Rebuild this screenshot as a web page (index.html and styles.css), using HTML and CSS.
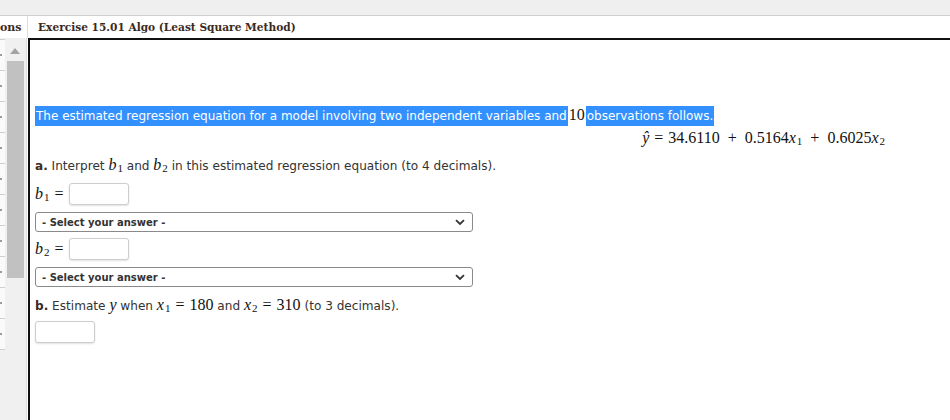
FILE: index.html
```html
<!DOCTYPE html>
<html>
<head>
<meta charset="utf-8">
<link rel="stylesheet" href="styles.css">
</head>
<body>
<div class="topbar"></div>
<div class="header">
  <div class="hside"><span>ons</span></div>
  <div class="htitle">Exercise 15.01 Algo (Least Square Method)</div>
</div>
<div class="main">
  <div class="side">
    <div class="list">
      <div class="li"></div><div class="li"></div><div class="li"></div><div class="li"></div>
      <div class="li"></div><div class="li"></div><div class="li"></div><div class="li"></div>
      <div class="li"></div><div class="li"></div>
    </div>
    <div class="scroll">
      <div class="arrow"></div>
      <div class="thumb"></div>
    </div>
  </div>
  <div class="gap"></div>
  <div class="content">
    <p class="intro"><span class="sel">The estimated regression equation for a model involving two independent variables and</span><span class="num">10</span><span class="sel">observations follows.</span></p>
    <p class="eq"><span class="mi">ŷ</span><span class="op">=</span>34.6110 &nbsp;+&nbsp; 0.5164<span class="mi">x</span><sub>1</sub> &nbsp;+&nbsp; 0.6025<span class="mi">x</span><sub>2</sub></p>
    <p class="q qa"><b class="lbl">a.</b> Interpret <span class="m"><span class="mi">b</span><sub>1</sub></span> and <span class="m"><span class="mi">b</span><sub>2</sub></span> in this estimated regression equation (to 4 decimals).</p>
    <div class="row r1"><span class="m lab"><span class="mi">b</span><sub>1</sub><span class="op">=</span></span><input class="inp" type="text"></div>
    <div class="selwrap s1">
      <select class="dd"><option>- Select your answer -</option></select>
      <svg class="chev" width="10" height="7" viewBox="0 0 10 7"><path d="M1 1.2 L5 5 L9 1.2" fill="none" stroke="#333" stroke-width="1.8"/></svg>
    </div>
    <div class="row r2"><span class="m lab"><span class="mi">b</span><sub>2</sub><span class="op">=</span></span><input class="inp" type="text"></div>
    <div class="selwrap s2">
      <select class="dd"><option>- Select your answer -</option></select>
      <svg class="chev" width="10" height="7" viewBox="0 0 10 7"><path d="M1 1.2 L5 5 L9 1.2" fill="none" stroke="#333" stroke-width="1.8"/></svg>
    </div>
    <p class="q qb"><b class="lbl">b.</b> Estimate <span class="m"><span class="mi">y</span></span> when <span class="m"><span class="mi">x</span><sub>1</sub><span class="op">=</span>180</span> and <span class="m"><span class="mi">x</span><sub>2</sub><span class="op">=</span>310</span> (to 3 decimals).</p>
    <input class="inp inp-b" type="text">
  </div>
</div>
</body>
</html>
```
FILE: styles.css
```css
* { box-sizing: border-box; }
body {
  margin: 0;
  width: 950px;
  height: 420px;
  overflow: hidden;
  background: #fff;
  font-family: "DejaVu Sans", Verdana, sans-serif;
  font-size: 12px;
  color: #333;
}
.topbar {
  height: 16px;
  background: #efefef;
  border-bottom: 1px solid #cfcfcf;
}
.header {
  display: flex;
  height: 22px;
  font-family: "DejaVu Serif", serif;
  font-weight: bold;
  font-size: 10.6px;
  color: #3b2a20;
}
.hside {
  width: 28px;
  border-right: 1px solid #ddd;
  display: flex;
  align-items: center;
  padding-left: 0;
  white-space: nowrap;
  font-size: 11px;
}
.htitle {
  padding-left: 10px;
  display: flex;
  align-items: center;
  white-space: nowrap;
}
.main {
  display: flex;
  height: 382px;
}
.side {
  width: 27px;
  border-right: 1px solid #ddd;
  background: #f0f0f0;
  display: flex;
}
.list {
  width: 5px;
  background: #fafafa;
  margin-top: 1px;
  border-top: 1px solid #cfcfcf;
  align-self: flex-start;
}
.li {
  height: 31px;
  border-bottom: 1px solid #cfcfcf;
  position: relative;
}
.li::after {
  content: "";
  position: absolute;
  left: 0;
  top: 14px;
  width: 2px;
  height: 2px;
  background: #9a9a9a;
}
.scroll {
  width: 21px;
  padding-left: 2px;
}
.arrow {
  width: 0;
  height: 0;
  border-left: 5px solid transparent;
  border-right: 5px solid transparent;
  border-bottom: 6px solid #a3a3a3;
  margin: 10px 0 0 3px;
}
.thumb {
  width: 17px;
  height: 217px;
  background: #c1c1c1;
  margin-top: 7px;
}
.gap { width: 1px; }
.content {
  flex: 1;
  border-left: 2px solid #111;
  border-top: 2px solid #111;
  padding-left: 5px;
}
p { margin: 0; }
.intro {
  margin-top: 65px;
  height: 20px;
  white-space: nowrap;
}
.sel {
  display: inline-block;
  height: 20px;
  line-height: 20px;
  background: #3390ff;
  color: #fff;
  padding: 0 1px;
}
.num {
  display: inline-block;
  font-family: "Liberation Serif", serif;
  font-size: 16px;
  line-height: 20px;
  color: #111;
  padding: 0 1px;
}
.eq {
  margin-top: 3px;
  text-align: right;
  padding-right: 65px;
  font-family: "Liberation Serif", serif;
  font-size: 16px;
  line-height: 20px;
  color: #111;
}
.m {
  font-family: "Liberation Serif", serif;
  font-size: 16px;
  color: #111;
}
.mi { font-style: italic; }
sub {
  font-size: 11px;
  line-height: 0;
  vertical-align: -2px;
  margin-left: 1px;
}
.op { margin: 0 5px; }
.q {
  line-height: 16px;
  white-space: nowrap;
  font-size: 12.1px;
}
.lbl { color: #3b2a20; }
.qa { margin-top: 9px; }
.row {
  display: flex;
  align-items: center;
  height: 22px;
  gap: 0;
}
.r1 { margin-top: 9px; }
.r2 { margin-top: 6px; }
.lab { white-space: nowrap; }
.inp {
  width: 60px;
  height: 22px;
  border: 1px solid #cdcdcd;
  border-radius: 3px;
  box-shadow: 0 1px 2px rgba(0,0,0,0.12);
  background: #fff;
  margin: 0;
  padding: 0;
}
.selwrap {
  position: relative;
  width: 438px;
  height: 20px;
}
.s1 { margin-top: 7px; }
.s2 { margin-top: 7px; }
.dd {
  appearance: none;
  -webkit-appearance: none;
  width: 100%;
  height: 20px;
  border: 1px solid #8a8a8a;
  border-radius: 3px;
  background: #fff;
  font-family: "DejaVu Sans", Verdana, sans-serif;
  font-weight: bold;
  font-size: 10px;
  color: #333;
  padding: 0 0 0 6px;
  margin: 0;
}
.chev {
  position: absolute;
  right: 8px;
  top: 7px;
}
.qb { margin-top: 10px; }
.inp-b {
  display: block;
  margin-top: 7px;
}
```
